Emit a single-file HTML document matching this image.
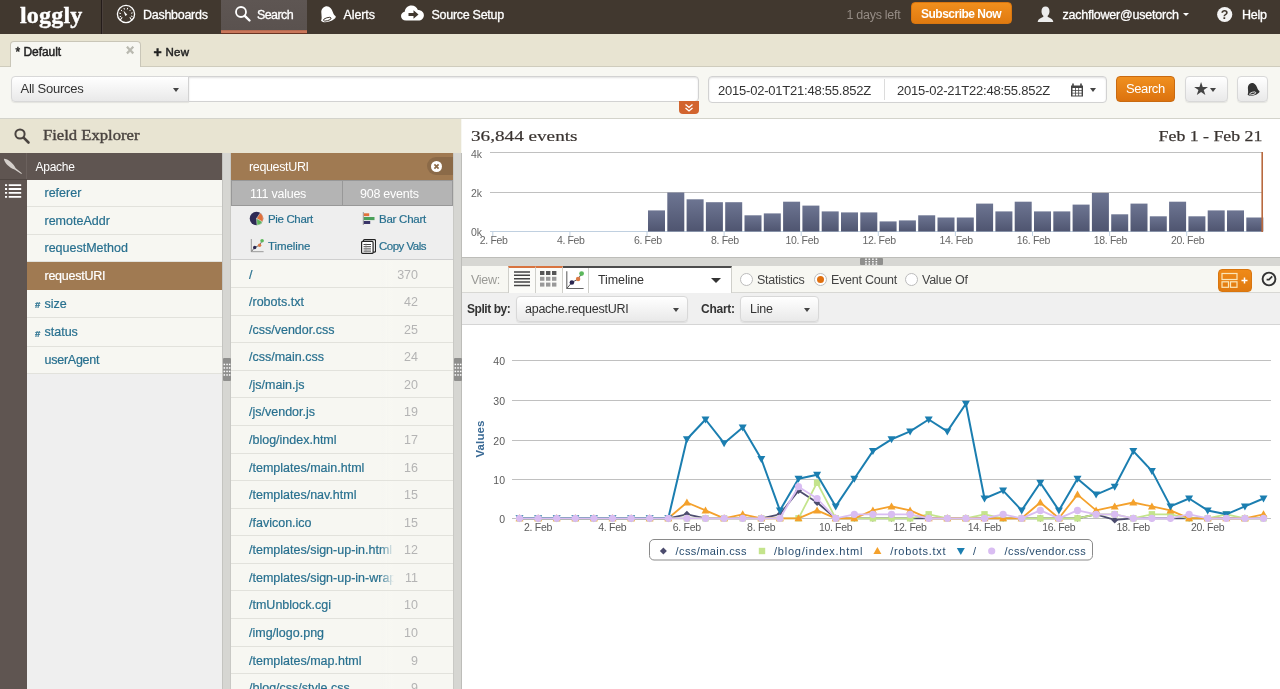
<!DOCTYPE html>
<html>
<head>
<meta charset="utf-8">
<title>Loggly</title>
<style>
*{box-sizing:border-box;margin:0;padding:0}
html,body{width:1280px;height:689px;overflow:hidden}
body{font-family:"Liberation Sans",sans-serif;font-size:12.5px;color:#333;background:#f7f7f2;position:relative}
.abs{position:absolute}
.t{position:absolute;white-space:nowrap;line-height:1}
/* NAV */
#nav{position:absolute;left:0;top:0;width:1280px;height:34px;background:#41382f}
#nav .t{color:#fff;font-size:12.5px;letter-spacing:-0.28px;top:9px;-webkit-text-stroke:0.3px}
#logo{position:absolute;left:20px;top:-0.500px;-webkit-text-stroke:0.4px;font-family:"Liberation Serif",serif;font-weight:bold;font-size:24px;color:#fff;letter-spacing:0.2px;line-height:30px}
#navsep{position:absolute;left:101px;top:0;width:1px;height:34px;background:#241c1a}
#navsep2{position:absolute;left:102px;top:0;width:1px;height:34px;background:#4a403c}
#searchtab{position:absolute;left:221px;top:0;width:86px;height:34px;background:linear-gradient(#5e5653 0,#5a524f 30px,#8a4a35 30px,#c9775b 30.7px,#c9775b 33px,#6a3524 33px,#6a3524 34px)}
/* TAB BAR */
#tabbar{position:absolute;left:0;top:34px;width:1280px;height:33px;background:#e8e4d2;border-bottom:1px solid #cfccbd}
#tab{position:absolute;left:10px;top:41px;width:131px;height:26px;background:#f7f7f2;border:1px solid #c9c6b8;border-bottom:none;border-radius:4px 4px 0 0}
/* SEARCH ROW */
#srow{position:absolute;left:0;top:67px;width:1280px;height:52px;background:#f7f7f2;border-bottom:1px solid #d3d3cb}
.btn{position:absolute;border:1px solid #d8d8d8;border-radius:4px;background:linear-gradient(#ffffff,#e9e9e9);box-shadow:0 1px 1px rgba(0,0,0,.08)}
.inp{position:absolute;border:1px solid #d2d2d2;border-radius:4px;background:#fff;box-shadow:inset 0 1px 2px rgba(0,0,0,.12)}
.caret{position:absolute;width:0;height:0;border-left:3.500px solid transparent;border-right:3.500px solid transparent;border-top:4px solid #444}
.obtn{position:absolute;border:1px solid #c96a10;border-radius:4px;background:linear-gradient(#f0901f,#dc720e);color:#fff}
/* LEFT */
#fehead{position:absolute;left:0;top:119px;width:461px;height:34px;background:#e8e4d2}
#lside{position:absolute;left:0;top:153px;width:27px;height:536px;background:#5f5551}
#lcol{position:absolute;left:27px;top:153px;width:195px;height:536px;background:#efefef}
#gap1{position:absolute;left:222px;top:153px;width:9px;height:536px;background:#d6d6d2;border-left:1px solid #c4c4c0;border-right:1px solid #c9c9c5}
#gap2{position:absolute;left:453px;top:153px;width:9px;height:536px;background:#d6d6d2;border-left:1px solid #c9c9c5;border-right:1px solid #bdbdb9}
#rcol{position:absolute;left:231px;top:153px;width:222px;height:536px;background:#f7f7f2}
.lrow{-webkit-text-stroke:0.2px;position:absolute;left:27px;width:195px;height:28px;background:#f7f7f2;border-bottom:1px solid #e2e2dc;color:#28708f;font-size:12.5px;letter-spacing:0;padding-left:17.500px;padding-top:0}
.vrow{-webkit-text-stroke:0.2px;position:absolute;left:231px;width:222px;border-bottom:1px solid #e2e2dc;color:#28708f;font-size:12.5px;letter-spacing:0;padding-left:18px;white-space:nowrap;overflow:hidden}
.vrow b{position:absolute;left:163px;width:59px;top:0;bottom:0;font-weight:normal;color:#b4b4b4;background:#f7f7f2;text-align:right;padding-right:35px;-webkit-text-stroke:0}
.vrow i{position:absolute;left:149px;width:14px;top:0;bottom:0;background:linear-gradient(90deg,rgba(247,247,242,0),#f7f7f2)}
.lnk{-webkit-text-stroke:0.2px;color:#28708f;font-size:11.5px;letter-spacing:-0.25px;margin-top:2px}
/* RIGHT */
#rp{position:absolute;left:462px;top:119px;width:818px;height:570px;background:#fff}
#divider{position:absolute;left:462px;top:257px;width:818px;height:10px;background:#d7d7d3;border-top:1px solid #bdbdb9;border-bottom:1.500px solid #b9b9b5}
#tool{position:absolute;left:462px;top:266px;width:818px;height:27px;background:#f7f7f2;border-bottom:1px solid #d8d8d4}
#split{position:absolute;left:462px;top:293px;width:818px;height:32px;background:#f0f0f0;border-bottom:1px solid #d5d5d5}
.slab{font-family:"Liberation Serif",serif}
svg text.ax{font-family:"Liberation Sans",sans-serif;font-size:10.5px;fill:#666}
svg text.ax2{font-family:"Liberation Sans",sans-serif;font-size:10.5px;fill:#5a5a5a}
svg text.vt{font-family:"Liberation Sans",sans-serif;font-size:11.5px;font-weight:bold;fill:#3a6a95;letter-spacing:0.1px}
svg text.lg{font-family:"Liberation Sans",sans-serif;font-size:11px;fill:#274b6d}
</style>
</head>
<body>
<div id="wrap" style="position:absolute;left:0;top:0;width:1280px;height:689px;will-change:transform">
<!-- ============ NAV ============ -->
<div id="nav">
  <div id="logo">loggly</div>
  <div id="navsep"></div><div id="navsep2"></div>
  <div id="searchtab"></div>
  <!-- dashboards icon -->
  <svg class="abs" style="left:116px;top:4px" width="20" height="20" viewBox="0 0 20 20"><circle cx="10" cy="10" r="8.600" fill="none" stroke="#fff" stroke-width="1.300"/><path d="M5.11 12.28L3.61 12.83M4.90 9.51L3.32 9.20M6.14 7.02L4.95 5.95M8.48 5.53L8.01 4.00M11.26 5.45L11.65 3.90M13.68 6.82L14.81 5.69M15.05 9.24L16.60 8.85M14.97 12.02L16.50 12.49" stroke="#fff" stroke-width="1" fill="none"/><path d="M9.300 12L7.400 6.500L11.300 10.800z" fill="#fff"/><path d="M4.300 16L6.200 13.300M15.700 16L13.800 13.300" stroke="#fff" stroke-width="1.100"/></svg>
  <div class="t" style="left:143px">Dashboards</div>
  <!-- search icon -->
  <svg class="abs" style="left:234px;top:5px" width="18" height="18" viewBox="0 0 18 18"><circle cx="7" cy="7" r="5" fill="none" stroke="#fff" stroke-width="1.8"/><path d="M10.8 10.8L15.5 15.5" stroke="#fff" stroke-width="2.4" stroke-linecap="round"/></svg>
  <div class="t" style="left:257px;letter-spacing:-0.6px">Search</div>
  <!-- bell -->
  <svg class="abs" style="left:319px;top:5px" width="18" height="18" viewBox="0 0 18 18"><path d="M7.200 1.200C10.500 0.800 13.300 4.300 14.100 7.800C14.500 9.400 15.400 10.300 16.700 11.200A7.600 3.300 -16.600 0 1 2 15.600C3.200 13.500 2.400 10.200 2.300 7.200C2.200 4 4.400 1.600 7.200 1.200Z" fill="#fff"/><ellipse cx="8.300" cy="14.200" rx="4" ry="1.500" fill="none" stroke="#41382f" stroke-width="0.900" transform="rotate(-16.600 8.300 14.200)"/></svg>
  <div class="t" style="left:343.500px;letter-spacing:-0.1px">Alerts</div>
  <!-- cloud -->
  <svg class="abs" style="left:400px;top:4px" width="26" height="18" viewBox="0 0 26 18"><path d="M6 16.500c-3 0-5-2-5-4.500c0-2.300 1.600-3.900 3.700-4.300c.3-3.500 3.200-6.200 6.800-6.200c3 0 5.500 1.800 6.400 4.500c3.300 0 6 2.200 6 5.200c0 2.900-2.400 5.300-5.400 5.300z" fill="#fff"/><path d="M8.500 9h5v-2.700l5 4.200l-5 4.200v-2.700h-5z" fill="#41382f"/></svg>
  <div class="t" style="left:431.500px">Source Setup</div>

  <div class="t" style="left:846.500px;color:#958c85;-webkit-text-stroke:0">1 days left</div>
  <div class="obtn" style="left:911px;top:2px;width:101px;height:22px;border-color:#d9760f;background:linear-gradient(#f18f1d,#e07a10)"></div>
  <div class="t" style="left:921px;top:8px;font-weight:bold;font-size:12px;letter-spacing:-0.5px;-webkit-text-stroke:0">Subscribe Now</div>
  <!-- user -->
  <svg class="abs" style="left:1037px;top:5px" width="17" height="18" viewBox="0 0 17 18"><path d="M8.500 1.600C11 1.600 12.500 3.700 12.500 6.200C12.500 8.200 11.700 9.800 10.700 10.800L10.700 11.900C13.200 12.800 15.900 13.800 16.300 17.100L0.700 17.100C1.100 13.800 3.800 12.800 6.300 11.900L6.300 10.800C5.300 9.800 4.500 8.200 4.500 6.200C4.500 3.700 6 1.600 8.500 1.600Z" fill="#ececec"/></svg>
  <div class="t" style="left:1062.500px;letter-spacing:-0.22px">zachflower@usetorch</div>
  <div class="caret" style="left:1183px;top:13px;border-top-color:#fff;border-width:3.500px 3.500px 0 3.500px"></div>
  <!-- help -->
  <svg class="abs" style="left:1216px;top:6px" width="17" height="17" viewBox="0 0 17 17"><circle cx="8.700" cy="8.500" r="7.600" fill="#f4f4f4"/><text x="8.500" y="13" text-anchor="middle" font-family="Liberation Sans" font-weight="bold" font-size="12.500" fill="#41382f">?</text></svg>
  <div class="t" style="left:1242px">Help</div>
</div>

<!-- ============ TAB BAR ============ -->
<div id="tabbar"></div>
<div id="tab"></div>
<div class="t" style="left:15.500px;top:46px;font-size:12px;color:#222;letter-spacing:-0.05px;-webkit-text-stroke:0.45px">* Default</div>
<div class="t" style="left:126px;top:43px;font-size:14px;font-weight:bold;color:#b9b9b0;-webkit-text-stroke:0.6px">&#215;</div>
<div class="t" style="left:153.500px;top:44px;font-size:11.500px;color:#222;letter-spacing:0.3px;-webkit-text-stroke:0.45px"><b style="font-size:14px;position:relative;top:0.500px">+</b> New</div>

<!-- ============ SEARCH ROW ============ -->
<div id="srow"></div>
<div class="btn" style="left:11px;top:76px;width:178px;height:26px;border-radius:4px 0 0 4px"></div>
<div class="t" style="left:20.500px;top:82px;font-size:13px;letter-spacing:-0.25px;color:#333">All Sources</div>
<div class="caret" style="left:173px;top:88px"></div>
<div class="inp" style="left:188px;top:76px;width:511px;height:26px;border-radius:0 4px 4px 0"></div>
<!-- expand btn -->
<div class="abs" style="left:679px;top:101px;width:20px;height:13px;background:#d2642e;border-radius:0 0 4px 4px"></div>
<svg class="abs" style="left:684px;top:102.800px" width="10" height="10" viewBox="0 0 10 10"><path d="M1.5 1.500L5 4.500L8.500 1.500M1.500 5L5 8L8.500 5" fill="none" stroke="#fff" stroke-width="1.300"/></svg>
<!-- date -->
<div class="inp" style="left:708px;top:76px;width:399px;height:27px"></div>
<div class="abs" style="left:884px;top:79px;width:1px;height:21px;background:#dcdcdc"></div>
<div class="t" style="left:718px;top:84px;font-size:13px;letter-spacing:-0.22px;color:#333">2015-02-01T21:48:55.852Z</div>
<div class="t" style="left:897px;top:84px;font-size:13px;letter-spacing:-0.22px;color:#333">2015-02-21T22:48:55.852Z</div>
<svg class="abs" style="left:1070px;top:83px" width="14" height="14" viewBox="0 0 14 14"><path d="M1 2.500h12v11h-12z" fill="#444"/><path d="M3 0.500v3M11 0.500v3" stroke="#444" stroke-width="1.600"/><path d="M2.500 5h2.500v2h-2.500zM5.800 5h2.500v2h-2.500zM9.100 5h2.500v2h-2.500zM2.500 7.800h2.500v2h-2.500zM5.800 7.800h2.500v2h-2.500zM9.100 7.800h2.500v2h-2.500zM2.500 10.600h2.500v2h-2.500zM5.800 10.600h2.500v2h-2.500zM9.100 10.600h2.500v2h-2.500z" fill="#fff"/></svg>
<div class="caret" style="left:1090px;top:88px"></div>
<div class="obtn" style="left:1116px;top:76px;width:59px;height:26px"></div>
<div class="t" style="left:1126px;top:82px;font-size:13px;letter-spacing:-0.4px;color:#fff">Search</div>
<div class="btn" style="left:1185px;top:76px;width:43px;height:26px"></div>
<div class="t" style="left:1193px;top:80px;font-size:18px;color:#444">&#9733;</div>
<div class="caret" style="left:1210px;top:88px"></div>
<div class="btn" style="left:1237px;top:76px;width:31px;height:26px"></div>
<svg class="abs" style="left:1245.500px;top:82px" width="14.500" height="14.500" viewBox="0 0 18 18"><path d="M7.200 1.200C10.500 0.800 13.300 4.300 14.100 7.800C14.500 9.400 15.400 10.300 16.700 11.200A7.600 3.300 -16.600 0 1 2 15.600C3.200 13.500 2.400 10.200 2.300 7.200C2.200 4 4.400 1.600 7.200 1.200Z" fill="#333"/><ellipse cx="8.300" cy="14.200" rx="4" ry="1.500" fill="none" stroke="#eee" stroke-width="1.100" transform="rotate(-16.600 8.300 14.200)"/></svg>

<!-- ============ LEFT: FIELD EXPLORER ============ -->
<div id="fehead"></div>
<svg class="abs" style="left:13px;top:127px" width="18" height="18" viewBox="0 0 18 18"><circle cx="7" cy="7" r="4.600" fill="none" stroke="#4a4440" stroke-width="2"/><path d="M10.600 10.600L15.500 15.500" stroke="#4a4440" stroke-width="2.600" stroke-linecap="round"/></svg>
<div class="t slab" style="left:43px;top:127.800px;font-size:15px;color:#4a4440;transform:scaleX(1.108);transform-origin:0 0;-webkit-text-stroke:0.4px #4a4440">Field Explorer</div>
<div id="lside"></div>
<div id="lcol"></div>
<div id="gap1"></div>
<div id="rcol"></div>
<div id="gap2"></div>
<!-- sidebar icons -->
<svg class="abs" style="left:3px;top:157px" width="20" height="18" viewBox="0 0 20 18"><path d="M0.900 1.700C4.800 1.600 10.600 6.600 12.700 11.200L18.900 16.300L18.400 16.900L11.500 12.500C6.300 10.700 1.200 5.600 0.900 1.700Z" fill="#d5d0cc"/></svg>
<div class="abs" style="left:0;top:179px;width:222px;height:1px;background:#4f4642"></div><div class="abs" style="left:26px;top:153px;width:1px;height:26px;background:#6b615d"></div>
<svg class="abs" style="left:4px;top:183px" width="18" height="16" viewBox="0 0 18 16"><path d="M1 2.100h2.100M4.700 2.100h12.500M1 6h2.100M4.700 6h12.500M1 9.900h2.100M4.700 9.900h12.500M1 13.900h2.100M4.700 13.900h12.500" stroke="#fff" stroke-width="1.800"/></svg>
<!-- left list -->
<div class="abs" style="left:27px;top:153px;width:195px;height:27px;background:#5f5551"></div>
<div class="t" style="left:35.500px;top:161px;color:#fff;font-size:12px;letter-spacing:-0.25px">Apache</div>
<div class="lrow" style="top:180px;height:27px;line-height:27px">referer</div>
<div class="lrow" style="top:207px;height:28px;line-height:28px">remoteAddr</div>
<div class="lrow" style="top:235px;height:27px;line-height:27px">requestMethod</div>
<div class="lrow" style="top:262px;height:28px;line-height:28px;background:#a07a52;color:#fff;border-bottom-color:#a07a52;letter-spacing:-0.25px">requestURI</div>
<div class="lrow" style="top:290px;height:28px;line-height:28px"><span style="font-size:9.500px;font-weight:bold;position:absolute;left:8px;top:0.500px">#</span>size</div>
<div class="lrow" style="top:318px;height:29px;line-height:29px"><span style="font-size:9.500px;font-weight:bold;position:absolute;left:8px;top:0.500px">#</span>status</div>
<div class="lrow" style="top:347px;height:27px;line-height:27px;letter-spacing:-0.25px">userAgent</div>
<!-- splitter handles -->
<svg class="abs" style="left:222.6px;top:358px" width="8" height="23" viewBox="0 0 8 23"><rect width="8" height="23" rx="1" fill="#8f8f8d"/><rect x="0.6" y="5.7" width="1.5" height="1.5" fill="#fff"/><rect x="0.6" y="9.2" width="1.5" height="1.5" fill="#fff"/><rect x="0.6" y="12.7" width="1.5" height="1.5" fill="#fff"/><rect x="0.6" y="16.2" width="1.5" height="1.5" fill="#fff"/><rect x="3.3" y="5.7" width="1.5" height="1.5" fill="#fff"/><rect x="3.3" y="9.2" width="1.5" height="1.5" fill="#fff"/><rect x="3.3" y="12.7" width="1.5" height="1.5" fill="#fff"/><rect x="3.3" y="16.2" width="1.5" height="1.5" fill="#fff"/><rect x="5.9" y="5.7" width="1.5" height="1.5" fill="#fff"/><rect x="5.9" y="9.2" width="1.5" height="1.5" fill="#fff"/><rect x="5.9" y="12.7" width="1.5" height="1.5" fill="#fff"/><rect x="5.9" y="16.2" width="1.5" height="1.5" fill="#fff"/></svg>
<svg class="abs" style="left:453.6px;top:358px" width="8" height="23" viewBox="0 0 8 23"><rect width="8" height="23" rx="1" fill="#8f8f8d"/><rect x="0.6" y="5.7" width="1.5" height="1.5" fill="#fff"/><rect x="0.6" y="9.2" width="1.5" height="1.5" fill="#fff"/><rect x="0.6" y="12.7" width="1.5" height="1.5" fill="#fff"/><rect x="0.6" y="16.2" width="1.5" height="1.5" fill="#fff"/><rect x="3.3" y="5.7" width="1.5" height="1.5" fill="#fff"/><rect x="3.3" y="9.2" width="1.5" height="1.5" fill="#fff"/><rect x="3.3" y="12.7" width="1.5" height="1.5" fill="#fff"/><rect x="3.3" y="16.2" width="1.5" height="1.5" fill="#fff"/><rect x="5.9" y="5.7" width="1.5" height="1.5" fill="#fff"/><rect x="5.9" y="9.2" width="1.5" height="1.5" fill="#fff"/><rect x="5.9" y="12.7" width="1.5" height="1.5" fill="#fff"/><rect x="5.9" y="16.2" width="1.5" height="1.5" fill="#fff"/></svg>

<!-- requestURI panel -->
<div class="abs" style="left:231px;top:153px;width:222px;height:27px;background:#a07a52"></div>
<div class="t" style="left:249px;top:161px;color:#fff;font-size:12.5px;letter-spacing:-0.35px">requestURI</div>
<div class="abs" style="left:427px;top:157px;width:26px;height:18px;background:#8b6a48;border-radius:9px 0 0 9px"></div>
<svg class="abs" style="left:430px;top:160px" width="13" height="13" viewBox="0 0 13 13"><circle cx="6.500" cy="6.500" r="5.500" fill="#fff"/><path d="M4.400 4.400L8.600 8.600M8.600 4.400L4.400 8.600" stroke="#8b6a48" stroke-width="1.700"/></svg>
<div class="abs" style="left:231px;top:180px;width:222px;height:26px;background:#b4b4b4;border:1px solid #989898"></div>
<div class="abs" style="left:342px;top:180px;width:1px;height:26px;background:#989898"></div>
<div class="t" style="left:250px;top:188px;color:#fff;font-size:12.5px;letter-spacing:-0.25px">111 values</div>
<div class="t" style="left:360px;top:188px;color:#fff;font-size:12.5px;letter-spacing:-0.25px">908 events</div>
<div class="abs" style="left:231px;top:206px;width:222px;height:54px;background:#eeeeee;border-bottom:1px solid #cfcfcf"></div>
<!-- pie icon -->
<svg class="abs" style="left:249px;top:210.600px" width="15" height="15" viewBox="0 0 15 15"><circle cx="7.500" cy="7.500" r="6.800" fill="#2e2a55"/><path d="M7.500 7.500L11.300 1.900A6.800 6.800 0 0 1 13.400 10.900z" fill="#e0703a" stroke="#eee" stroke-width="0.500"/><path d="M7.500 7.500L13.400 10.900A6.800 6.800 0 0 1 8 14.300z" fill="#5db35a" stroke="#eee" stroke-width="0.500"/></svg>
<div class="t lnk" style="left:268px;top:212px;letter-spacing:-0.35px">Pie Chart</div>
<!-- bar icon -->
<svg class="abs" style="left:361px;top:211px" width="15" height="16" viewBox="0 0 15 16"><path d="M2.300 1v13" stroke="#999" stroke-width="1"/><rect x="2.800" y="2.300" width="5.400" height="2.800" fill="#e0703a"/><rect x="2.800" y="6" width="10.700" height="3.100" fill="#4aa05a"/><rect x="2.800" y="10" width="6.400" height="3" fill="#3a3568"/></svg>
<div class="t lnk" style="left:379px;top:212px">Bar Chart</div>
<!-- timeline icon -->
<svg class="abs" style="left:250px;top:238px" width="15" height="15" viewBox="0 0 15 15"><path d="M1.300 1v12.700h12.300" fill="none" stroke="#999" stroke-width="1"/><path d="M1.600 13.300L4.700 9.500L9.600 7.200L12.100 2.800" stroke="#555" stroke-width="0.800" fill="none"/><circle cx="4.700" cy="9.500" r="1.700" fill="#2a2650"/><circle cx="9.600" cy="7.200" r="1.700" fill="#dc7a45"/><circle cx="12.100" cy="2.800" r="1.800" fill="#5cb85c"/></svg>
<div class="t lnk" style="left:268px;top:239px;letter-spacing:-0.1px">Timeline</div>
<!-- copy icon -->
<svg class="abs" style="left:361px;top:239px" width="15" height="15" viewBox="0 0 15 15"><rect x="2.500" y="0.600" width="12" height="12.500" rx="1" fill="#fff" stroke="#222" stroke-width="1.200"/><rect x="0.600" y="2.400" width="11.500" height="12" rx="1" fill="#fff" stroke="#222" stroke-width="1.200"/><path d="M2.500 5.500h7.500M2.500 7.700h7.500M2.500 9.900h7.500M2.500 12.100h7.500" stroke="#444" stroke-width="1"/><path d="M5 4.500v9" stroke="#888" stroke-width="0.600"/></svg>
<div class="t lnk" style="left:379px;top:239px;letter-spacing:-0.5px">Copy Vals</div>
<!-- values -->
<div class="vrow" style="top:261px;height:27px;line-height:28px">/<i></i><b>370</b></div>
<div class="vrow" style="top:288px;height:28px;line-height:29px">/robots.txt<i></i><b>42</b></div>
<div class="vrow" style="top:316px;height:27px;line-height:28px">/css/vendor.css<i></i><b>25</b></div>
<div class="vrow" style="top:343px;height:28px;line-height:29px">/css/main.css<i></i><b>24</b></div>
<div class="vrow" style="top:371px;height:27px;line-height:28px">/js/main.js<i></i><b>20</b></div>
<div class="vrow" style="top:398px;height:28px;line-height:29px">/js/vendor.js<i></i><b>19</b></div>
<div class="vrow" style="top:426px;height:28px;line-height:29px">/blog/index.html<i></i><b>17</b></div>
<div class="vrow" style="top:454px;height:27px;line-height:28px">/templates/main.html<i></i><b>16</b></div>
<div class="vrow" style="top:481px;height:28px;line-height:29px">/templates/nav.html<i></i><b>15</b></div>
<div class="vrow" style="top:509px;height:27px;line-height:28px">/favicon.ico<i></i><b>15</b></div>
<div class="vrow" style="top:536px;height:28px;line-height:29px">/templates/sign-up-in.html<i></i><b>12</b></div>
<div class="vrow" style="top:564px;height:27px;line-height:28px">/templates/sign-up-in-wrapper.html<i></i><b>11</b></div>
<div class="vrow" style="top:591px;height:28px;line-height:29px">/tmUnblock.cgi<i></i><b>10</b></div>
<div class="vrow" style="top:619px;height:28px;line-height:29px">/img/logo.png<i></i><b>10</b></div>
<div class="vrow" style="top:647px;height:27px;line-height:28px">/templates/map.html<i></i><b>9</b></div>
<div class="vrow" style="top:674px;height:28px;line-height:29px">/blog/css/style.css<i></i><b>9</b></div>

<!-- ============ RIGHT PANEL ============ -->
<div id="rp"></div>
<div class="t slab" style="left:471px;top:128.400px;font-size:15.500px;color:#3a3431;transform:scaleX(1.237);transform-origin:0 0;-webkit-text-stroke:0.2px #3a3431">36,844 events</div>
<div class="t slab" style="right:18px;top:128.400px;font-size:15.500px;color:#3a3431;transform:scaleX(1.148);transform-origin:100% 0;-webkit-text-stroke:0.25px #3a3431">Feb 1 - Feb 21</div>
<div id="divider"></div>
<svg class="abs" style="left:860px;top:258px" width="23" height="7" viewBox="0 0 23 7"><rect width="23" height="7" rx="1" fill="#8f8f8d"/><rect x="5.2" y="0.5" width="1.6" height="1.4" fill="#fff"/><rect x="5.2" y="3.0" width="1.6" height="1.4" fill="#fff"/><rect x="5.2" y="5.4" width="1.6" height="1.4" fill="#fff"/><rect x="8.5" y="0.5" width="1.6" height="1.4" fill="#fff"/><rect x="8.5" y="3.0" width="1.6" height="1.4" fill="#fff"/><rect x="8.5" y="5.4" width="1.6" height="1.4" fill="#fff"/><rect x="12.1" y="0.5" width="1.6" height="1.4" fill="#fff"/><rect x="12.1" y="3.0" width="1.6" height="1.4" fill="#fff"/><rect x="12.1" y="5.4" width="1.6" height="1.4" fill="#fff"/><rect x="15.6" y="0.5" width="1.6" height="1.4" fill="#fff"/><rect x="15.6" y="3.0" width="1.6" height="1.4" fill="#fff"/><rect x="15.6" y="5.4" width="1.6" height="1.4" fill="#fff"/></svg>
<div id="tool"></div>
<div id="split"></div>
<!-- toolbar content -->
<div class="t" style="left:471px;top:274px;font-size:12.5px;color:#9a9a96;letter-spacing:-0.3px">View:</div>
<div class="abs" style="left:508px;top:266px;width:28px;height:27px;background:#fbfbf8;border-top:2px solid #d8733f;border-left:1px solid #cfcfca;border-right:1px solid #cfcfca"></div>
<div class="abs" style="left:536px;top:266px;width:27px;height:27px;background:#fbfbf8;border-top:2px solid #d8733f;border-right:1px solid #cfcfca"></div>
<div class="abs" style="left:563px;top:266px;width:169px;height:27px;background:#fff;border-top:2px solid #4c4c4c;border-right:1px solid #cfcfca"></div>
<div class="abs" style="left:588px;top:268px;width:1px;height:25px;background:#cfcfca"></div>
<svg class="abs" style="left:514px;top:271px" width="17" height="16" viewBox="0 0 17 16"><path d="M0 0.900h16M0 4.300h16M0 7.700h16M0 11.100h16M0 14.500h16" stroke="#444" stroke-width="1.500"/></svg>
<svg class="abs" style="left:540px;top:271px" width="17" height="16" viewBox="0 0 17 16"><g fill="#555"><rect x="0" y="0" width="4.400" height="4" /><rect x="6" y="0" width="4.400" height="4"/><rect x="12" y="0" width="4.400" height="4"/></g><g fill="#999"><rect x="0" y="5.800" width="4.400" height="4"/><rect x="6" y="5.800" width="4.400" height="4"/><rect x="12" y="5.800" width="4.400" height="4"/><rect x="0" y="11.600" width="4.400" height="4"/><rect x="6" y="11.600" width="4.400" height="4"/><rect x="12" y="11.600" width="4.400" height="4"/></g></svg>
<svg class="abs" style="left:566px;top:270px" width="19" height="20" viewBox="0 0 19 20"><path d="M0.800 1.200v17.300h16.800" fill="none" stroke="#666" stroke-width="1.100"/><path d="M1.200 18L5.900 12.500L12.100 9L15.600 3.600" stroke="#444" stroke-width="0.900" fill="none"/><circle cx="5.900" cy="12.500" r="2.300" fill="#2a2650"/><circle cx="12.100" cy="9" r="2.200" fill="#dc7a45"/><circle cx="15.600" cy="3.600" r="2.400" fill="#5cb85c"/></svg>
<div class="t" style="left:598px;top:274px;font-size:12.5px;color:#333;letter-spacing:-0.1px">Timeline</div>
<div class="caret" style="left:711px;top:278px;border-left-width:5.400px;border-right-width:5.400px;border-top-width:5px;border-top-color:#333"></div>
<div class="abs" style="left:740px;top:273px;width:13px;height:13px;border:1px solid #bbb;border-radius:50%;background:#fff"></div>
<div class="t" style="left:757px;top:274px;font-size:12.5px;color:#444;letter-spacing:-0.25px">Statistics</div>
<div class="abs" style="left:814px;top:273px;width:13px;height:13px;border:1px solid #bbb;border-radius:50%;background:#fff"></div>
<div class="abs" style="left:817px;top:276px;width:7px;height:7px;border-radius:50%;background:#e0700f"></div>
<div class="t" style="left:831px;top:274px;font-size:12.5px;color:#444;letter-spacing:-0.25px">Event Count</div>
<div class="abs" style="left:905px;top:273px;width:13px;height:13px;border:1px solid #bbb;border-radius:50%;background:#fff"></div>
<div class="t" style="left:922px;top:274px;font-size:12.5px;color:#444;letter-spacing:-0.25px">Value Of</div>
<div class="obtn" style="left:1218px;top:269px;width:34px;height:23px;border-radius:4px;border-color:#d9760f;background:linear-gradient(#ef8a18,#e07a10)"></div>
<svg class="abs" style="left:1221px;top:272px" width="28" height="17" viewBox="0 0 28 17"><g fill="none" stroke="#fbe6b8" stroke-width="1.200"><rect x="1" y="1.500" width="15" height="6"/><rect x="1" y="9.800" width="6.500" height="5.500"/><rect x="9.500" y="9.800" width="6.500" height="5.500"/></g><path d="M23.500 5.500v6M20.500 8.500h6" stroke="#fff" stroke-width="1.500"/></svg>
<svg class="abs" style="left:1261px;top:271px" width="16" height="16" viewBox="0 0 16 16"><circle cx="8" cy="8" r="6.400" fill="none" stroke="#333" stroke-width="1.900"/><path d="M11.200 5.300L8 8.600L5.600 8.600" stroke="#333" stroke-width="1.700" fill="none"/></svg>
<!-- split row -->
<div class="t" style="left:467px;top:303px;font-size:12px;font-weight:bold;color:#333;letter-spacing:-0.45px">Split by:</div>
<div class="btn" style="left:516px;top:296px;width:172px;height:26px"></div>
<div class="t" style="left:525px;top:303px;font-size:12.5px;color:#333;letter-spacing:-0.25px">apache.requestURI</div>
<div class="caret" style="left:673px;top:308px"></div>
<div class="t" style="left:701px;top:303px;font-size:12px;font-weight:bold;color:#333;letter-spacing:-0.25px">Chart:</div>
<div class="btn" style="left:740px;top:296px;width:79px;height:26px"></div>
<div class="t" style="left:750px;top:303px;font-size:12.5px;color:#333;letter-spacing:-0.25px">Line</div>
<div class="caret" style="left:804px;top:308px"></div>

<!-- charts -->
<svg class="abs" style="left:0;top:0;pointer-events:none" width="1280" height="689" viewBox="0 0 1280 689">
<defs><linearGradient id="bg" x1="0" y1="0" x2="0" y2="1"><stop offset="0" stop-color="#6d7592"/><stop offset="1" stop-color="#4f5570"/></linearGradient></defs>
<line x1="490" y1="152.5" x2="1262" y2="152.5" stroke="#c0c0c0" stroke-width="1"/>
<line x1="490" y1="192.5" x2="1262" y2="192.5" stroke="#c0c0c0" stroke-width="1"/>
<line x1="490" y1="231.5" x2="1262" y2="231.5" stroke="#c0d0e0" stroke-width="1"/>
<rect x="648.0" y="210.4" width="17" height="21.1" fill="url(#bg)"/>
<rect x="667.3" y="192.5" width="17" height="39.0" fill="url(#bg)"/>
<rect x="686.6" y="199.3" width="17" height="32.2" fill="url(#bg)"/>
<rect x="705.9" y="202.2" width="17" height="29.2" fill="url(#bg)"/>
<rect x="725.2" y="202.2" width="17" height="29.2" fill="url(#bg)"/>
<rect x="744.5" y="215.3" width="17" height="16.2" fill="url(#bg)"/>
<rect x="763.8" y="213.4" width="17" height="18.1" fill="url(#bg)"/>
<rect x="783.1" y="201.7" width="17" height="29.8" fill="url(#bg)"/>
<rect x="802.4" y="205.6" width="17" height="25.9" fill="url(#bg)"/>
<rect x="821.7" y="211.4" width="17" height="20.1" fill="url(#bg)"/>
<rect x="841.0" y="212.4" width="17" height="19.1" fill="url(#bg)"/>
<rect x="860.3" y="212.4" width="17" height="19.1" fill="url(#bg)"/>
<rect x="879.6" y="221.4" width="17" height="10.1" fill="url(#bg)"/>
<rect x="898.9" y="220.4" width="17" height="11.1" fill="url(#bg)"/>
<rect x="918.2" y="215.3" width="17" height="16.2" fill="url(#bg)"/>
<rect x="937.5" y="217.5" width="17" height="14.0" fill="url(#bg)"/>
<rect x="956.8" y="217.5" width="17" height="14.0" fill="url(#bg)"/>
<rect x="976.1" y="203.6" width="17" height="27.9" fill="url(#bg)"/>
<rect x="995.4" y="211.4" width="17" height="20.1" fill="url(#bg)"/>
<rect x="1014.7" y="201.7" width="17" height="29.8" fill="url(#bg)"/>
<rect x="1034.0" y="211.4" width="17" height="20.1" fill="url(#bg)"/>
<rect x="1053.3" y="211.4" width="17" height="20.1" fill="url(#bg)"/>
<rect x="1072.6" y="204.6" width="17" height="26.9" fill="url(#bg)"/>
<rect x="1091.9" y="192.9" width="17" height="38.6" fill="url(#bg)"/>
<rect x="1111.2" y="214.3" width="17" height="17.2" fill="url(#bg)"/>
<rect x="1130.5" y="203.6" width="17" height="27.9" fill="url(#bg)"/>
<rect x="1149.8" y="216.3" width="17" height="15.2" fill="url(#bg)"/>
<rect x="1169.1" y="201.7" width="17" height="29.8" fill="url(#bg)"/>
<rect x="1188.4" y="216.3" width="17" height="15.2" fill="url(#bg)"/>
<rect x="1207.7" y="210.4" width="17" height="21.1" fill="url(#bg)"/>
<rect x="1227.0" y="210.4" width="17" height="21.1" fill="url(#bg)"/>
<rect x="1246.3" y="217.5" width="17" height="14.0" fill="url(#bg)"/>
<line x1="492.8" y1="231" x2="492.8" y2="236" stroke="#c0d0e0" stroke-width="1"/>
<text x="479.8" y="244" class="ax" textLength="28.0" lengthAdjust="spacing">2. Feb</text>
<line x1="569.9" y1="231" x2="569.9" y2="236" stroke="#c0d0e0" stroke-width="1"/>
<text x="556.9" y="244" class="ax" textLength="28.0" lengthAdjust="spacing">4. Feb</text>
<line x1="647.0" y1="231" x2="647.0" y2="236" stroke="#c0d0e0" stroke-width="1"/>
<text x="634.0" y="244" class="ax" textLength="28.0" lengthAdjust="spacing">6. Feb</text>
<line x1="724.1" y1="231" x2="724.1" y2="236" stroke="#c0d0e0" stroke-width="1"/>
<text x="711.1" y="244" class="ax" textLength="28.0" lengthAdjust="spacing">8. Feb</text>
<line x1="801.2" y1="231" x2="801.2" y2="236" stroke="#c0d0e0" stroke-width="1"/>
<text x="785.5" y="244" class="ax" textLength="33.5" lengthAdjust="spacing">10. Feb</text>
<line x1="878.3" y1="231" x2="878.3" y2="236" stroke="#c0d0e0" stroke-width="1"/>
<text x="862.5" y="244" class="ax" textLength="33.5" lengthAdjust="spacing">12. Feb</text>
<line x1="955.4" y1="231" x2="955.4" y2="236" stroke="#c0d0e0" stroke-width="1"/>
<text x="939.6" y="244" class="ax" textLength="33.5" lengthAdjust="spacing">14. Feb</text>
<line x1="1032.5" y1="231" x2="1032.5" y2="236" stroke="#c0d0e0" stroke-width="1"/>
<text x="1016.8" y="244" class="ax" textLength="33.5" lengthAdjust="spacing">16. Feb</text>
<line x1="1109.6" y1="231" x2="1109.6" y2="236" stroke="#c0d0e0" stroke-width="1"/>
<text x="1093.8" y="244" class="ax" textLength="33.5" lengthAdjust="spacing">18. Feb</text>
<line x1="1186.7" y1="231" x2="1186.7" y2="236" stroke="#c0d0e0" stroke-width="1"/>
<text x="1171.0" y="244" class="ax" textLength="33.5" lengthAdjust="spacing">20. Feb</text>
<text x="471" y="158" class="ax">4k</text>
<text x="471" y="197" class="ax">2k</text>
<text x="471" y="236" class="ax">0k</text>
<line x1="1262.2" y1="152" x2="1262.2" y2="232" stroke="#b8693f" stroke-width="1.6"/>
<line x1="512" y1="518.5" x2="1271" y2="518.5" stroke="#c0c0c0" stroke-width="1"/>
<text x="505" y="523.0" class="ax2" text-anchor="end">0</text>
<line x1="512" y1="479.5" x2="1271" y2="479.5" stroke="#c0c0c0" stroke-width="1"/>
<text x="505" y="484.0" class="ax2" text-anchor="end">10</text>
<line x1="512" y1="440.5" x2="1271" y2="440.5" stroke="#c0c0c0" stroke-width="1"/>
<text x="505" y="445.0" class="ax2" text-anchor="end">20</text>
<line x1="512" y1="400.5" x2="1271" y2="400.5" stroke="#c0c0c0" stroke-width="1"/>
<text x="505" y="405.0" class="ax2" text-anchor="end">30</text>
<line x1="512" y1="360.5" x2="1271" y2="360.5" stroke="#c0c0c0" stroke-width="1"/>
<text x="505" y="365.0" class="ax2" text-anchor="end">40</text>
<text x="523.9" y="531" class="ax2" textLength="28.5" lengthAdjust="spacing">2. Feb</text>
<text x="598.2" y="531" class="ax2" textLength="28.5" lengthAdjust="spacing">4. Feb</text>
<text x="672.7" y="531" class="ax2" textLength="28.5" lengthAdjust="spacing">6. Feb</text>
<text x="747.1" y="531" class="ax2" textLength="28.5" lengthAdjust="spacing">8. Feb</text>
<text x="819.0" y="531" class="ax2" textLength="33.5" lengthAdjust="spacing">10. Feb</text>
<text x="893.4" y="531" class="ax2" textLength="33.5" lengthAdjust="spacing">12. Feb</text>
<text x="967.8" y="531" class="ax2" textLength="33.5" lengthAdjust="spacing">14. Feb</text>
<text x="1042.2" y="531" class="ax2" textLength="33.5" lengthAdjust="spacing">16. Feb</text>
<text x="1116.6" y="531" class="ax2" textLength="33.5" lengthAdjust="spacing">18. Feb</text>
<text x="1191.0" y="531" class="ax2" textLength="33.5" lengthAdjust="spacing">20. Feb</text>
<text transform="translate(484,439) rotate(-90)" class="vt" text-anchor="middle">Values</text>
<polyline points="519.5,518.3 538.1,518.3 556.7,518.3 575.3,518.3 593.9,518.3 612.5,518.3 631.1,518.3 649.7,518.3 668.3,518.3 686.9,514.3 705.5,518.3 724.1,518.3 742.7,518.3 761.3,518.3 779.9,514.3 798.5,490.6 817.1,502.5 835.7,518.3 854.3,518.3 872.9,518.3 891.5,518.3 910.1,518.3 928.7,518.3 947.3,518.3 965.9,518.3 984.5,518.3 1003.1,518.3 1021.7,518.3 1040.3,518.3 1058.9,518.3 1077.5,518.3 1096.1,514.3 1114.7,519.9 1133.3,518.3 1151.9,518.3 1170.5,518.3 1189.1,518.3 1207.7,518.3 1226.3,518.3 1244.9,518.3 1263.5,518.3" fill="none" stroke="#4c4c6e" stroke-width="1.8" stroke-linejoin="round"/>
<path d="M519.5 514.8l3.5 3.5l-3.5 3.5l-3.5 -3.5z" fill="#4c4c6e"/>
<path d="M538.1 514.8l3.5 3.5l-3.5 3.5l-3.5 -3.5z" fill="#4c4c6e"/>
<path d="M556.7 514.8l3.5 3.5l-3.5 3.5l-3.5 -3.5z" fill="#4c4c6e"/>
<path d="M575.3 514.8l3.5 3.5l-3.5 3.5l-3.5 -3.5z" fill="#4c4c6e"/>
<path d="M593.9 514.8l3.5 3.5l-3.5 3.5l-3.5 -3.5z" fill="#4c4c6e"/>
<path d="M612.5 514.8l3.5 3.5l-3.5 3.5l-3.5 -3.5z" fill="#4c4c6e"/>
<path d="M631.1 514.8l3.5 3.5l-3.5 3.5l-3.5 -3.5z" fill="#4c4c6e"/>
<path d="M649.7 514.8l3.5 3.5l-3.5 3.5l-3.5 -3.5z" fill="#4c4c6e"/>
<path d="M668.3 514.8l3.5 3.5l-3.5 3.5l-3.5 -3.5z" fill="#4c4c6e"/>
<path d="M686.9 510.8l3.5 3.5l-3.5 3.5l-3.5 -3.5z" fill="#4c4c6e"/>
<path d="M705.5 514.8l3.5 3.5l-3.5 3.5l-3.5 -3.5z" fill="#4c4c6e"/>
<path d="M724.1 514.8l3.5 3.5l-3.5 3.5l-3.5 -3.5z" fill="#4c4c6e"/>
<path d="M742.7 514.8l3.5 3.5l-3.5 3.5l-3.5 -3.5z" fill="#4c4c6e"/>
<path d="M761.3 514.8l3.5 3.5l-3.5 3.5l-3.5 -3.5z" fill="#4c4c6e"/>
<path d="M779.9 510.8l3.5 3.5l-3.5 3.5l-3.5 -3.5z" fill="#4c4c6e"/>
<path d="M798.5 487.1l3.5 3.5l-3.5 3.5l-3.5 -3.5z" fill="#4c4c6e"/>
<path d="M817.1 499.0l3.5 3.5l-3.5 3.5l-3.5 -3.5z" fill="#4c4c6e"/>
<path d="M835.7 514.8l3.5 3.5l-3.5 3.5l-3.5 -3.5z" fill="#4c4c6e"/>
<path d="M854.3 514.8l3.5 3.5l-3.5 3.5l-3.5 -3.5z" fill="#4c4c6e"/>
<path d="M872.9 514.8l3.5 3.5l-3.5 3.5l-3.5 -3.5z" fill="#4c4c6e"/>
<path d="M891.5 514.8l3.5 3.5l-3.5 3.5l-3.5 -3.5z" fill="#4c4c6e"/>
<path d="M910.1 514.8l3.5 3.5l-3.5 3.5l-3.5 -3.5z" fill="#4c4c6e"/>
<path d="M928.7 514.8l3.5 3.5l-3.5 3.5l-3.5 -3.5z" fill="#4c4c6e"/>
<path d="M947.3 514.8l3.5 3.5l-3.5 3.5l-3.5 -3.5z" fill="#4c4c6e"/>
<path d="M965.9 514.8l3.5 3.5l-3.5 3.5l-3.5 -3.5z" fill="#4c4c6e"/>
<path d="M984.5 514.8l3.5 3.5l-3.5 3.5l-3.5 -3.5z" fill="#4c4c6e"/>
<path d="M1003.1 514.8l3.5 3.5l-3.5 3.5l-3.5 -3.5z" fill="#4c4c6e"/>
<path d="M1021.7 514.8l3.5 3.5l-3.5 3.5l-3.5 -3.5z" fill="#4c4c6e"/>
<path d="M1040.3 514.8l3.5 3.5l-3.5 3.5l-3.5 -3.5z" fill="#4c4c6e"/>
<path d="M1058.9 514.8l3.5 3.5l-3.5 3.5l-3.5 -3.5z" fill="#4c4c6e"/>
<path d="M1077.5 514.8l3.5 3.5l-3.5 3.5l-3.5 -3.5z" fill="#4c4c6e"/>
<path d="M1096.1 510.8l3.5 3.5l-3.5 3.5l-3.5 -3.5z" fill="#4c4c6e"/>
<path d="M1114.7 516.4l3.5 3.5l-3.5 3.5l-3.5 -3.5z" fill="#4c4c6e"/>
<path d="M1133.3 514.8l3.5 3.5l-3.5 3.5l-3.5 -3.5z" fill="#4c4c6e"/>
<path d="M1151.9 514.8l3.5 3.5l-3.5 3.5l-3.5 -3.5z" fill="#4c4c6e"/>
<path d="M1170.5 514.8l3.5 3.5l-3.5 3.5l-3.5 -3.5z" fill="#4c4c6e"/>
<path d="M1189.1 514.8l3.5 3.5l-3.5 3.5l-3.5 -3.5z" fill="#4c4c6e"/>
<path d="M1207.7 514.8l3.5 3.5l-3.5 3.5l-3.5 -3.5z" fill="#4c4c6e"/>
<path d="M1226.3 514.8l3.5 3.5l-3.5 3.5l-3.5 -3.5z" fill="#4c4c6e"/>
<path d="M1244.9 514.8l3.5 3.5l-3.5 3.5l-3.5 -3.5z" fill="#4c4c6e"/>
<path d="M1263.5 514.8l3.5 3.5l-3.5 3.5l-3.5 -3.5z" fill="#4c4c6e"/>
<polyline points="519.5,518.3 538.1,518.3 556.7,518.3 575.3,518.3 593.9,518.3 612.5,518.3 631.1,518.3 649.7,518.3 668.3,518.3 686.9,518.3 705.5,518.3 724.1,518.3 742.7,518.3 761.3,518.3 779.9,518.3 798.5,518.3 817.1,482.7 835.7,518.3 854.3,518.3 872.9,518.3 891.5,518.3 910.1,518.3 928.7,514.3 947.3,518.3 965.9,518.3 984.5,514.3 1003.1,518.3 1021.7,518.3 1040.3,518.3 1058.9,518.3 1077.5,518.3 1096.1,514.3 1114.7,514.3 1133.3,518.3 1151.9,514.3 1170.5,514.3 1189.1,518.3 1207.7,518.3 1226.3,514.3 1244.9,518.3 1263.5,518.3" fill="none" stroke="#c4e48c" stroke-width="1.8" stroke-linejoin="round"/>
<rect x="516.3" y="515.1" width="6.4" height="6.4" fill="#c4e48c"/>
<rect x="534.9" y="515.1" width="6.4" height="6.4" fill="#c4e48c"/>
<rect x="553.5" y="515.1" width="6.4" height="6.4" fill="#c4e48c"/>
<rect x="572.1" y="515.1" width="6.4" height="6.4" fill="#c4e48c"/>
<rect x="590.7" y="515.1" width="6.4" height="6.4" fill="#c4e48c"/>
<rect x="609.3" y="515.1" width="6.4" height="6.4" fill="#c4e48c"/>
<rect x="627.9" y="515.1" width="6.4" height="6.4" fill="#c4e48c"/>
<rect x="646.5" y="515.1" width="6.4" height="6.4" fill="#c4e48c"/>
<rect x="665.1" y="515.1" width="6.4" height="6.4" fill="#c4e48c"/>
<rect x="683.7" y="515.1" width="6.4" height="6.4" fill="#c4e48c"/>
<rect x="702.3" y="515.1" width="6.4" height="6.4" fill="#c4e48c"/>
<rect x="720.9" y="515.1" width="6.4" height="6.4" fill="#c4e48c"/>
<rect x="739.5" y="515.1" width="6.4" height="6.4" fill="#c4e48c"/>
<rect x="758.1" y="515.1" width="6.4" height="6.4" fill="#c4e48c"/>
<rect x="776.7" y="515.1" width="6.4" height="6.4" fill="#c4e48c"/>
<rect x="795.3" y="515.1" width="6.4" height="6.4" fill="#c4e48c"/>
<rect x="813.9" y="479.5" width="6.4" height="6.4" fill="#c4e48c"/>
<rect x="832.5" y="515.1" width="6.4" height="6.4" fill="#c4e48c"/>
<rect x="851.1" y="515.1" width="6.4" height="6.4" fill="#c4e48c"/>
<rect x="869.7" y="515.1" width="6.4" height="6.4" fill="#c4e48c"/>
<rect x="888.3" y="515.1" width="6.4" height="6.4" fill="#c4e48c"/>
<rect x="906.9" y="515.1" width="6.4" height="6.4" fill="#c4e48c"/>
<rect x="925.5" y="511.1" width="6.4" height="6.4" fill="#c4e48c"/>
<rect x="944.1" y="515.1" width="6.4" height="6.4" fill="#c4e48c"/>
<rect x="962.7" y="515.1" width="6.4" height="6.4" fill="#c4e48c"/>
<rect x="981.3" y="511.1" width="6.4" height="6.4" fill="#c4e48c"/>
<rect x="999.9" y="515.1" width="6.4" height="6.4" fill="#c4e48c"/>
<rect x="1018.5" y="515.1" width="6.4" height="6.4" fill="#c4e48c"/>
<rect x="1037.1" y="515.1" width="6.4" height="6.4" fill="#c4e48c"/>
<rect x="1055.7" y="515.1" width="6.4" height="6.4" fill="#c4e48c"/>
<rect x="1074.3" y="515.1" width="6.4" height="6.4" fill="#c4e48c"/>
<rect x="1092.9" y="511.1" width="6.4" height="6.4" fill="#c4e48c"/>
<rect x="1111.5" y="511.1" width="6.4" height="6.4" fill="#c4e48c"/>
<rect x="1130.1" y="515.1" width="6.4" height="6.4" fill="#c4e48c"/>
<rect x="1148.7" y="511.1" width="6.4" height="6.4" fill="#c4e48c"/>
<rect x="1167.3" y="511.1" width="6.4" height="6.4" fill="#c4e48c"/>
<rect x="1185.9" y="515.1" width="6.4" height="6.4" fill="#c4e48c"/>
<rect x="1204.5" y="515.1" width="6.4" height="6.4" fill="#c4e48c"/>
<rect x="1223.1" y="511.1" width="6.4" height="6.4" fill="#c4e48c"/>
<rect x="1241.7" y="515.1" width="6.4" height="6.4" fill="#c4e48c"/>
<rect x="1260.3" y="515.1" width="6.4" height="6.4" fill="#c4e48c"/>
<polyline points="519.5,518.3 538.1,518.3 556.7,518.3 575.3,518.3 593.9,518.3 612.5,518.3 631.1,518.3 649.7,518.3 668.3,518.3 686.9,502.5 705.5,510.4 724.1,518.3 742.7,514.3 761.3,518.3 779.9,518.3 798.5,518.3 817.1,510.4 835.7,518.3 854.3,518.3 872.9,510.4 891.5,506.4 910.1,510.4 928.7,518.3 947.3,518.3 965.9,518.3 984.5,518.3 1003.1,518.3 1021.7,518.3 1040.3,502.5 1058.9,518.3 1077.5,494.6 1096.1,510.4 1114.7,506.4 1133.3,502.5 1151.9,506.4 1170.5,510.4 1189.1,518.3 1207.7,518.3 1226.3,518.3 1244.9,518.3 1263.5,514.3" fill="none" stroke="#f4a12c" stroke-width="1.8" stroke-linejoin="round"/>
<path d="M519.5 514.3l4 7h-8z" fill="#f4a12c"/>
<path d="M538.1 514.3l4 7h-8z" fill="#f4a12c"/>
<path d="M556.7 514.3l4 7h-8z" fill="#f4a12c"/>
<path d="M575.3 514.3l4 7h-8z" fill="#f4a12c"/>
<path d="M593.9 514.3l4 7h-8z" fill="#f4a12c"/>
<path d="M612.5 514.3l4 7h-8z" fill="#f4a12c"/>
<path d="M631.1 514.3l4 7h-8z" fill="#f4a12c"/>
<path d="M649.7 514.3l4 7h-8z" fill="#f4a12c"/>
<path d="M668.3 514.3l4 7h-8z" fill="#f4a12c"/>
<path d="M686.9 498.5l4 7h-8z" fill="#f4a12c"/>
<path d="M705.5 506.4l4 7h-8z" fill="#f4a12c"/>
<path d="M724.1 514.3l4 7h-8z" fill="#f4a12c"/>
<path d="M742.7 510.3l4 7h-8z" fill="#f4a12c"/>
<path d="M761.3 514.3l4 7h-8z" fill="#f4a12c"/>
<path d="M779.9 514.3l4 7h-8z" fill="#f4a12c"/>
<path d="M798.5 514.3l4 7h-8z" fill="#f4a12c"/>
<path d="M817.1 506.4l4 7h-8z" fill="#f4a12c"/>
<path d="M835.7 514.3l4 7h-8z" fill="#f4a12c"/>
<path d="M854.3 514.3l4 7h-8z" fill="#f4a12c"/>
<path d="M872.9 506.4l4 7h-8z" fill="#f4a12c"/>
<path d="M891.5 502.4l4 7h-8z" fill="#f4a12c"/>
<path d="M910.1 506.4l4 7h-8z" fill="#f4a12c"/>
<path d="M928.7 514.3l4 7h-8z" fill="#f4a12c"/>
<path d="M947.3 514.3l4 7h-8z" fill="#f4a12c"/>
<path d="M965.9 514.3l4 7h-8z" fill="#f4a12c"/>
<path d="M984.5 514.3l4 7h-8z" fill="#f4a12c"/>
<path d="M1003.1 514.3l4 7h-8z" fill="#f4a12c"/>
<path d="M1021.7 514.3l4 7h-8z" fill="#f4a12c"/>
<path d="M1040.3 498.5l4 7h-8z" fill="#f4a12c"/>
<path d="M1058.9 514.3l4 7h-8z" fill="#f4a12c"/>
<path d="M1077.5 490.6l4 7h-8z" fill="#f4a12c"/>
<path d="M1096.1 506.4l4 7h-8z" fill="#f4a12c"/>
<path d="M1114.7 502.4l4 7h-8z" fill="#f4a12c"/>
<path d="M1133.3 498.5l4 7h-8z" fill="#f4a12c"/>
<path d="M1151.9 502.4l4 7h-8z" fill="#f4a12c"/>
<path d="M1170.5 506.4l4 7h-8z" fill="#f4a12c"/>
<path d="M1189.1 514.3l4 7h-8z" fill="#f4a12c"/>
<path d="M1207.7 514.3l4 7h-8z" fill="#f4a12c"/>
<path d="M1226.3 514.3l4 7h-8z" fill="#f4a12c"/>
<path d="M1244.9 514.3l4 7h-8z" fill="#f4a12c"/>
<path d="M1263.5 510.3l4 7h-8z" fill="#f4a12c"/>
<polyline points="519.5,518.3 538.1,518.3 556.7,518.3 575.3,518.3 593.9,518.3 612.5,518.3 631.1,518.3 649.7,518.3 668.3,518.3 686.9,439.3 705.5,419.5 724.1,443.2 742.7,427.4 761.3,459.0 779.9,510.4 798.5,478.8 817.1,474.8 835.7,506.4 854.3,478.8 872.9,451.1 891.5,439.3 910.1,431.4 928.7,419.5 947.3,431.4 965.9,403.7 984.5,498.5 1003.1,490.6 1021.7,510.4 1040.3,482.7 1058.9,510.4 1077.5,478.8 1096.1,494.6 1114.7,486.7 1133.3,451.1 1151.9,470.9 1170.5,506.4 1189.1,498.5 1207.7,510.4 1226.3,514.3 1244.9,506.4 1263.5,498.5" fill="none" stroke="#1b7eb0" stroke-width="2" stroke-linejoin="round"/>
<path d="M519.5 522.3l-4 -7h8z" fill="#1b7eb0"/>
<path d="M538.1 522.3l-4 -7h8z" fill="#1b7eb0"/>
<path d="M556.7 522.3l-4 -7h8z" fill="#1b7eb0"/>
<path d="M575.3 522.3l-4 -7h8z" fill="#1b7eb0"/>
<path d="M593.9 522.3l-4 -7h8z" fill="#1b7eb0"/>
<path d="M612.5 522.3l-4 -7h8z" fill="#1b7eb0"/>
<path d="M631.1 522.3l-4 -7h8z" fill="#1b7eb0"/>
<path d="M649.7 522.3l-4 -7h8z" fill="#1b7eb0"/>
<path d="M668.3 522.3l-4 -7h8z" fill="#1b7eb0"/>
<path d="M686.9 443.3l-4 -7h8z" fill="#1b7eb0"/>
<path d="M705.5 423.5l-4 -7h8z" fill="#1b7eb0"/>
<path d="M724.1 447.2l-4 -7h8z" fill="#1b7eb0"/>
<path d="M742.7 431.4l-4 -7h8z" fill="#1b7eb0"/>
<path d="M761.3 463.0l-4 -7h8z" fill="#1b7eb0"/>
<path d="M779.9 514.4l-4 -7h8z" fill="#1b7eb0"/>
<path d="M798.5 482.8l-4 -7h8z" fill="#1b7eb0"/>
<path d="M817.1 478.8l-4 -7h8z" fill="#1b7eb0"/>
<path d="M835.7 510.4l-4 -7h8z" fill="#1b7eb0"/>
<path d="M854.3 482.8l-4 -7h8z" fill="#1b7eb0"/>
<path d="M872.9 455.1l-4 -7h8z" fill="#1b7eb0"/>
<path d="M891.5 443.3l-4 -7h8z" fill="#1b7eb0"/>
<path d="M910.1 435.4l-4 -7h8z" fill="#1b7eb0"/>
<path d="M928.7 423.5l-4 -7h8z" fill="#1b7eb0"/>
<path d="M947.3 435.4l-4 -7h8z" fill="#1b7eb0"/>
<path d="M965.9 407.7l-4 -7h8z" fill="#1b7eb0"/>
<path d="M984.5 502.5l-4 -7h8z" fill="#1b7eb0"/>
<path d="M1003.1 494.6l-4 -7h8z" fill="#1b7eb0"/>
<path d="M1021.7 514.4l-4 -7h8z" fill="#1b7eb0"/>
<path d="M1040.3 486.7l-4 -7h8z" fill="#1b7eb0"/>
<path d="M1058.9 514.4l-4 -7h8z" fill="#1b7eb0"/>
<path d="M1077.5 482.8l-4 -7h8z" fill="#1b7eb0"/>
<path d="M1096.1 498.6l-4 -7h8z" fill="#1b7eb0"/>
<path d="M1114.7 490.7l-4 -7h8z" fill="#1b7eb0"/>
<path d="M1133.3 455.1l-4 -7h8z" fill="#1b7eb0"/>
<path d="M1151.9 474.9l-4 -7h8z" fill="#1b7eb0"/>
<path d="M1170.5 510.4l-4 -7h8z" fill="#1b7eb0"/>
<path d="M1189.1 502.5l-4 -7h8z" fill="#1b7eb0"/>
<path d="M1207.7 514.4l-4 -7h8z" fill="#1b7eb0"/>
<path d="M1226.3 518.3l-4 -7h8z" fill="#1b7eb0"/>
<path d="M1244.9 510.4l-4 -7h8z" fill="#1b7eb0"/>
<path d="M1263.5 502.5l-4 -7h8z" fill="#1b7eb0"/>
<polyline points="519.5,518.3 538.1,518.3 556.7,518.3 575.3,518.3 593.9,518.3 612.5,518.3 631.1,518.3 649.7,518.3 668.3,518.3 686.9,518.3 705.5,518.3 724.1,518.3 742.7,518.3 761.3,518.3 779.9,518.3 798.5,486.7 817.1,498.5 835.7,518.3 854.3,514.3 872.9,514.3 891.5,514.3 910.1,514.3 928.7,518.3 947.3,518.3 965.9,518.3 984.5,518.3 1003.1,514.3 1021.7,518.3 1040.3,510.4 1058.9,518.3 1077.5,510.4 1096.1,514.3 1114.7,514.3 1133.3,518.3 1151.9,518.3 1170.5,518.3 1189.1,514.3 1207.7,518.3 1226.3,518.3 1244.9,518.3 1263.5,518.3" fill="none" stroke="#d9bdf2" stroke-width="1.8" stroke-linejoin="round"/>
<circle cx="519.5" cy="518.3" r="3.6" fill="#d9bdf2"/>
<circle cx="538.1" cy="518.3" r="3.6" fill="#d9bdf2"/>
<circle cx="556.7" cy="518.3" r="3.6" fill="#d9bdf2"/>
<circle cx="575.3" cy="518.3" r="3.6" fill="#d9bdf2"/>
<circle cx="593.9" cy="518.3" r="3.6" fill="#d9bdf2"/>
<circle cx="612.5" cy="518.3" r="3.6" fill="#d9bdf2"/>
<circle cx="631.1" cy="518.3" r="3.6" fill="#d9bdf2"/>
<circle cx="649.7" cy="518.3" r="3.6" fill="#d9bdf2"/>
<circle cx="668.3" cy="518.3" r="3.6" fill="#d9bdf2"/>
<circle cx="686.9" cy="518.3" r="3.6" fill="#d9bdf2"/>
<circle cx="705.5" cy="518.3" r="3.6" fill="#d9bdf2"/>
<circle cx="724.1" cy="518.3" r="3.6" fill="#d9bdf2"/>
<circle cx="742.7" cy="518.3" r="3.6" fill="#d9bdf2"/>
<circle cx="761.3" cy="518.3" r="3.6" fill="#d9bdf2"/>
<circle cx="779.9" cy="518.3" r="3.6" fill="#d9bdf2"/>
<circle cx="798.5" cy="486.7" r="3.6" fill="#d9bdf2"/>
<circle cx="817.1" cy="498.5" r="3.6" fill="#d9bdf2"/>
<circle cx="835.7" cy="518.3" r="3.6" fill="#d9bdf2"/>
<circle cx="854.3" cy="514.3" r="3.6" fill="#d9bdf2"/>
<circle cx="872.9" cy="514.3" r="3.6" fill="#d9bdf2"/>
<circle cx="891.5" cy="514.3" r="3.6" fill="#d9bdf2"/>
<circle cx="910.1" cy="514.3" r="3.6" fill="#d9bdf2"/>
<circle cx="928.7" cy="518.3" r="3.6" fill="#d9bdf2"/>
<circle cx="947.3" cy="518.3" r="3.6" fill="#d9bdf2"/>
<circle cx="965.9" cy="518.3" r="3.6" fill="#d9bdf2"/>
<circle cx="984.5" cy="518.3" r="3.6" fill="#d9bdf2"/>
<circle cx="1003.1" cy="514.3" r="3.6" fill="#d9bdf2"/>
<circle cx="1021.7" cy="518.3" r="3.6" fill="#d9bdf2"/>
<circle cx="1040.3" cy="510.4" r="3.6" fill="#d9bdf2"/>
<circle cx="1058.9" cy="518.3" r="3.6" fill="#d9bdf2"/>
<circle cx="1077.5" cy="510.4" r="3.6" fill="#d9bdf2"/>
<circle cx="1096.1" cy="514.3" r="3.6" fill="#d9bdf2"/>
<circle cx="1114.7" cy="514.3" r="3.6" fill="#d9bdf2"/>
<circle cx="1133.3" cy="518.3" r="3.6" fill="#d9bdf2"/>
<circle cx="1151.9" cy="518.3" r="3.6" fill="#d9bdf2"/>
<circle cx="1170.5" cy="518.3" r="3.6" fill="#d9bdf2"/>
<circle cx="1189.1" cy="514.3" r="3.6" fill="#d9bdf2"/>
<circle cx="1207.7" cy="518.3" r="3.6" fill="#d9bdf2"/>
<circle cx="1226.3" cy="518.3" r="3.6" fill="#d9bdf2"/>
<circle cx="1244.9" cy="518.3" r="3.6" fill="#d9bdf2"/>
<circle cx="1263.5" cy="518.3" r="3.6" fill="#d9bdf2"/>
<rect x="649.5" y="539.5" width="443" height="20.5" rx="4.5" ry="4.5" fill="#fff" stroke="#8a8a8a" stroke-width="1"/>
<path d="M663.4 547.5l3.5 3.5l-3.5 3.5l-3.5 -3.5z" fill="#4c4c6e"/>
<text x="675.5" y="555" class="lg" textLength="71" lengthAdjust="spacing">/css/main.css</text>
<rect x="758.8" y="547.8" width="6.4" height="6.4" fill="#c4e48c"/>
<text x="774" y="555" class="lg" textLength="88.4" lengthAdjust="spacing">/blog/index.html</text>
<path d="M877.4 547.0l4 7h-8z" fill="#f4a12c"/>
<text x="890.2" y="555" class="lg" textLength="55.3" lengthAdjust="spacing">/robots.txt</text>
<path d="M960.8 555.0l-4 -7h8z" fill="#1b7eb0"/>
<text x="973" y="555" class="lg">/</text>
<circle cx="991.7" cy="551.0" r="3.6" fill="#d9bdf2"/>
<text x="1004.5" y="555" class="lg" textLength="81.3" lengthAdjust="spacing">/css/vendor.css</text>
</svg>
<!-- left edge shadow of main chart -->

</div>
</body>
</html>
